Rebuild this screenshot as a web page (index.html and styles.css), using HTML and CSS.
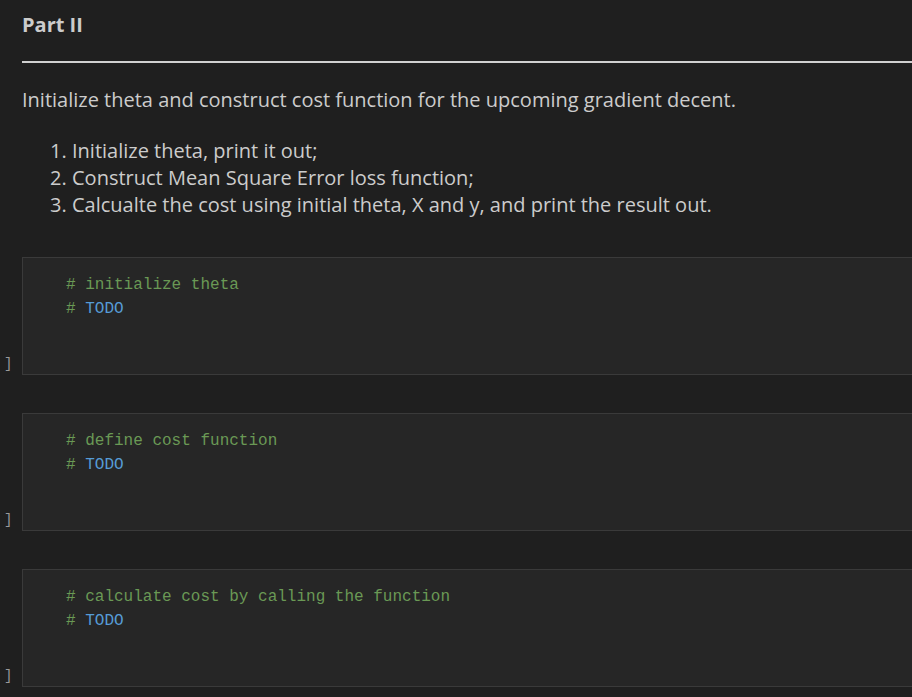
FILE: index.html
```html
<!DOCTYPE html>
<html>
<head>
<meta charset="utf-8">
<link rel="stylesheet" href="styles.css">
</head>
<body>
<div class="notebook">
  <div class="markdown">
    <h2 class="title">Part II</h2>
    <div class="rule"></div>
    <p class="para">Initialize theta and construct cost function for the upcoming gradient decent.</p>
    <ol class="steps">
      <li>Initialize theta, print it out;</li>
      <li>Construct Mean Square Error loss function;</li>
      <li>Calcualte the cost using initial theta, X and y, and print the result out.</li>
    </ol>
  </div>
  <div class="cells">
    <div class="cell">
      <div class="prompt">]</div>
      <div class="code"><div class="line"><span class="cm"># initialize theta</span></div><div class="line"><span class="cm"># </span><span class="todo">TODO</span></div></div>
    </div>
    <div class="cell">
      <div class="prompt">]</div>
      <div class="code"><div class="line"><span class="cm"># define cost function</span></div><div class="line"><span class="cm"># </span><span class="todo">TODO</span></div></div>
    </div>
    <div class="cell">
      <div class="prompt">]</div>
      <div class="code"><div class="line"><span class="cm"># calculate cost by calling the function</span></div><div class="line"><span class="cm"># </span><span class="todo">TODO</span></div></div>
    </div>
  </div>
</div>
</body>
</html>
```
FILE: styles.css
```css
html, body {
  margin: 0;
  padding: 0;
  background: #1f1f1f;
  overflow: hidden;
}
.notebook {
  width: 912px;
  height: 697px;
  color: #cccccc;
  font-family: "Open Sans", "Noto Sans", sans-serif;
}
.markdown {
  padding-left: 22px;
  padding-top: 12px;
}
.title {
  margin: 0;
  font-size: 20px;
  font-weight: 700;
  line-height: 26px;
  color: #cccccc;
}
.rule {
  height: 2px;
  background: #d0d0d0;
  margin-top: 23px;
}
.para {
  margin: 24px 0 0 0;
  font-size: 20px;
  line-height: 26px;
}
.steps {
  margin: 24px 0 0 0;
  padding-left: 50px;
  font-size: 20px;
  line-height: 27px;
}
.cells {
  margin-top: 39px;
  display: flex;
  flex-direction: column;
  gap: 38px;
}
.cell {
  display: flex;
  align-items: stretch;
}
.prompt {
  width: 22px;
  display: flex;
  align-items: flex-end;
  padding-left: 4px;
  box-sizing: border-box;
  padding-bottom: 3px;
  font-family: "Liberation Mono", monospace;
  font-size: 14px;
  color: #9a9a9a;
}
.code {
  flex: 1;
  height: 118px;
  box-sizing: border-box;
  border: 1px solid #3a3a3a;
  border-right: none;
  background: #262626;
  padding: 15px 0 0 43px;
  font-family: "Liberation Mono", monospace;
  font-size: 16px;
  line-height: 24px;
}
.cm { color: #6a9955; }
.todo { color: #569cd6; }
```
